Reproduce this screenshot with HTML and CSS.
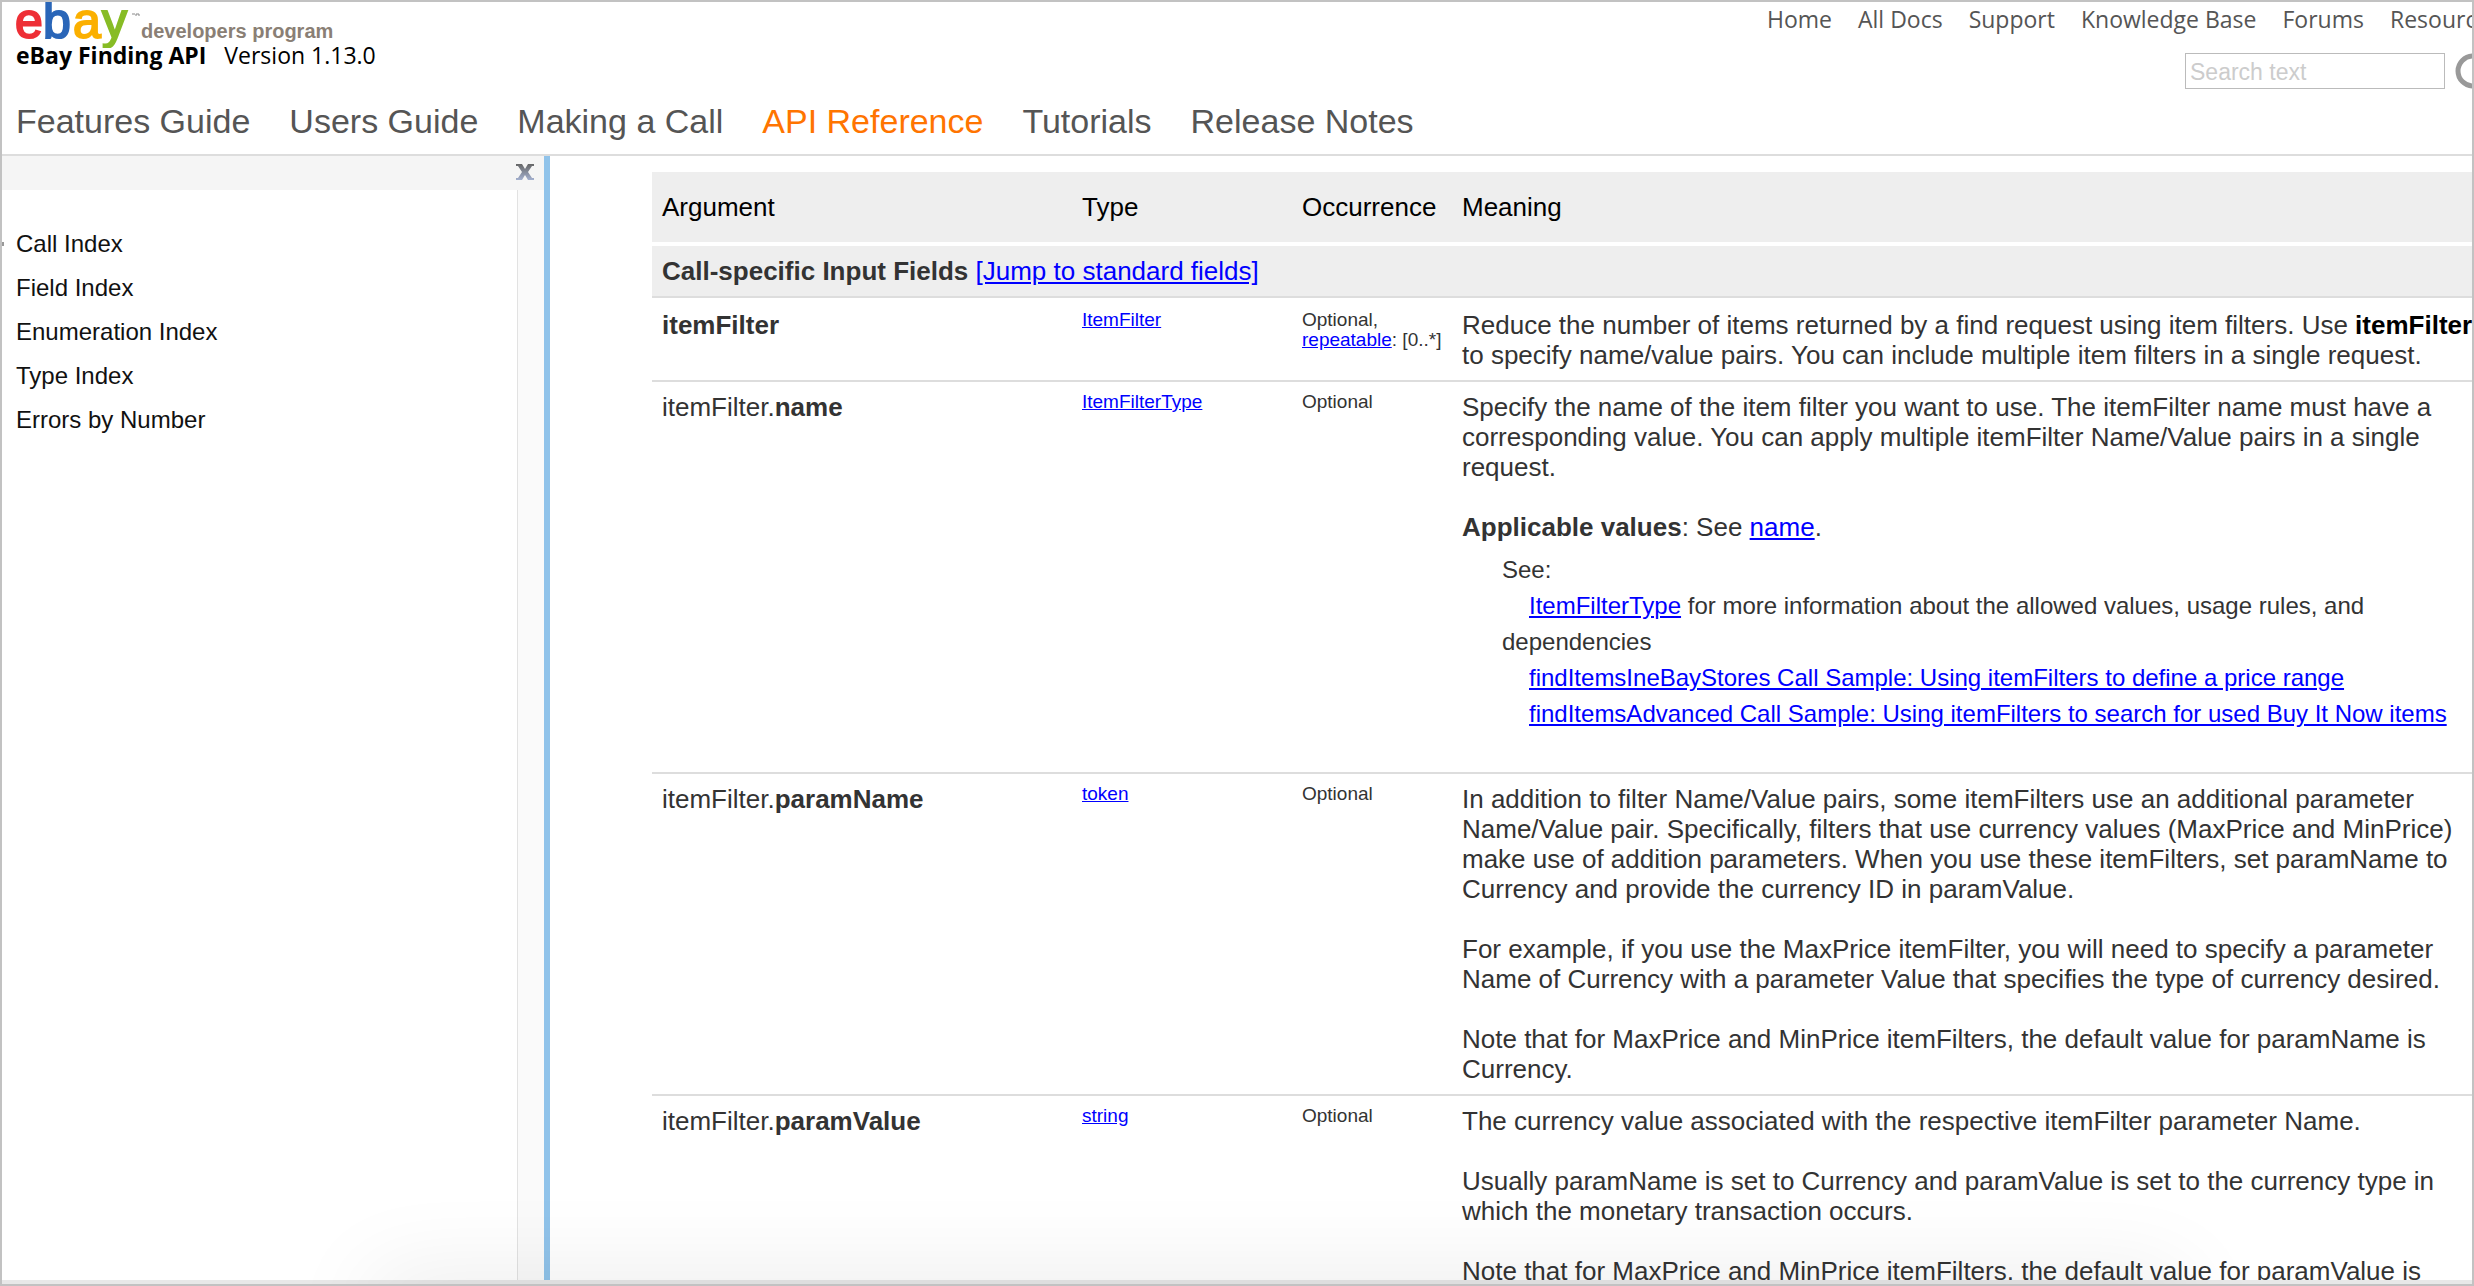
FILE: index.html
```html
<!DOCTYPE html>
<html lang="en">
<head>
  <meta charset="UTF-8">
  <meta name="viewport" content="width=device-width, initial-scale=1.0">
  <title>eBay Finding API</title>
  <link rel="stylesheet" href="styles.css">
</head>
<body>
  <div class="page">
    <header class="header">
      <div class="top">
        <div class="brand">
          <a class="logo" href="#" aria-label="eBay developers program">
            <svg width="340" height="46" viewBox="0 0 340 46">
              <g class="logoName">
                <text x="-1" y="36" fill="#ee2f36" stroke="#ee2f36">e</text>
                <text x="27" y="36" fill="#2a66b8" stroke="#2a66b8">b</text>
                <text x="57" y="36" fill="#fbb000" stroke="#fbb000">a</text>
                <text x="86" y="36" fill="#87bc25" stroke="#87bc25">y</text>
              </g>
              <path d="M116 12h3M120 14v-2h3v2" fill="none" stroke="#888" />
              <text class="logoText" x="125" y="36">developers program</text>
            </svg>
          </a>
          <p class="version"><b>eBay Finding API</b><span>Version 1.13.0</span></p>
        </div>
        <div class="tools">
          <nav class="links">
            <a href="#">Home</a>
            <a href="#">All Docs</a>
            <a href="#">Support</a>
            <a href="#">Knowledge Base</a>
            <a href="#">Forums</a>
            <a href="#">Resources</a>
          </nav>
          <form class="search">
            <input class="searchText" type="text" placeholder="Search text" aria-label="Search text">
            <button class="searchButton" type="button" aria-label="Search">
              <svg width="46" height="46" viewBox="0 0 46 46">
                <circle cx="18" cy="18" r="15" fill="none" stroke="#999" stroke-width="5" />
                <path d="M29 29l13 13" stroke="#999" stroke-width="6" />
              </svg>
            </button>
          </form>
        </div>
      </div>
      <nav class="menu">
        <a href="#">Features Guide</a>
        <a href="#">Users Guide</a>
        <a href="#">Making a Call</a>
        <a class="active" href="#">API Reference</a>
        <a href="#">Tutorials</a>
        <a href="#">Release Notes</a>
      </nav>
    </header>

    <div class="content">
      <aside class="sidebar">
        <div class="sidebarTop">
          <button class="close" type="button" aria-label="Close">
            <svg width="18" height="16" viewBox="0 0 18 16">
              <defs>
                <linearGradient id="closeFill" x1="0" y1="0" x2="0" y2="1">
                  <stop offset="0" stop-color="#666" />
                  <stop offset="1" stop-color="#a3b0cf" />
                </linearGradient>
              </defs>
              <path d="M0 0h6l3 5 3-5h6v2h-2l-4 6 4 6h2v2h-6l-3-5-3 5H0v-2h2l4-6-4-6H0z" fill="url(#closeFill)" />
            </svg>
          </button>
        </div>
        <div class="sidebarBody">
          <ul class="index">
            <li class="current"><a href="#">Call Index</a></li>
            <li><a href="#">Field Index</a></li>
            <li><a href="#">Enumeration Index</a></li>
            <li><a href="#">Type Index</a></li>
            <li><a href="#">Errors by Number</a></li>
          </ul>
          <div class="track"></div>
        </div>
      </aside>

      <main class="main">
        <table class="fields">
          <colgroup>
            <col class="colArgument">
            <col class="colType">
            <col class="colOccurrence">
            <col>
          </colgroup>
          <thead>
            <tr>
              <th>Argument</th>
              <th>Type</th>
              <th>Occurrence</th>
              <th>Meaning</th>
            </tr>
          </thead>
          <tbody>
            <tr class="section">
              <td colspan="4"><b>Call-specific Input Fields</b> <a href="#">[Jump to standard fields]</a></td>
            </tr>
            <tr>
              <td><b>itemFilter</b></td>
              <td class="small"><a href="#">ItemFilter</a></td>
              <td class="small">Optional,<br><a href="#">repeatable</a>:&nbsp;[0..*]</td>
              <td>Reduce the number of items returned by a find request using item filters. Use <b class="dark">itemFilter</b> to specify name/value pairs. You can include multiple item filters in a single request.</td>
            </tr>
            <tr>
              <td>itemFilter.<b>name</b></td>
              <td class="small"><a href="#">ItemFilterType</a></td>
              <td class="small">Optional</td>
              <td>
                <p>Specify the name of the item filter you want to use. The itemFilter name must have a corresponding value. You can apply multiple itemFilter Name/Value pairs in a single request.</p>
                <p><b>Applicable values</b>: See <a href="#">name</a>.</p>
                <div class="see">
                  See:
                  <div class="seeItem"><a href="#">ItemFilterType</a> for more information about the allowed values, usage rules, and dependencies</div>
                  <div class="seeItem"><a href="#">findItemsIneBayStores Call Sample: Using itemFilters to define a price range</a></div>
                  <div class="seeItem"><a href="#">findItemsAdvanced Call Sample: Using itemFilters to search for used Buy It Now items</a></div>
                </div>
              </td>
            </tr>
            <tr>
              <td>itemFilter.<b>paramName</b></td>
              <td class="small"><a href="#">token</a></td>
              <td class="small">Optional</td>
              <td>
                <p>In addition to filter Name/Value pairs, some itemFilters use an additional parameter Name/Value pair. Specifically, filters that use currency values (MaxPrice and MinPrice) make use of addition parameters. When you use these itemFilters, set paramName to Currency and provide the currency ID in paramValue.</p>
                <p>For example, if you use the MaxPrice itemFilter, you will need to specify a parameter Name of Currency with a parameter Value that specifies the type of currency desired.</p>
                <p>Note that for MaxPrice and MinPrice itemFilters, the default value for paramName is Currency.</p>
              </td>
            </tr>
            <tr>
              <td>itemFilter.<b>paramValue</b></td>
              <td class="small"><a href="#">string</a></td>
              <td class="small">Optional</td>
              <td>
                <p>The currency value associated with the respective itemFilter parameter Name.</p>
                <p>Usually paramName is set to Currency and paramValue is set to the currency type in which the monetary transaction occurs.</p>
                <p>Note that for MaxPrice and MinPrice itemFilters, the default value for paramValue is</p>
              </td>
            </tr>
          </tbody>
        </table>
      </main>
    </div>
    <div class="shade"></div>
  </div>
</body>
</html>
```

FILE: styles.css
```css
* {
  box-sizing: border-box;
}
body {
  margin: 0;
  font-family: "Liberation Sans", Arial, sans-serif;
  font-size: 26px;
  line-height: 30px;
  color: #333;
}
a {
  color: #0000ff;
}
p {
  margin: 0;
}
button {
  padding: 0;
  border: none;
  background: none;
  cursor: pointer;
}
svg {
  display: block;
}
.page {
  position: relative;
  display: flex;
  flex-direction: column;
  height: 100vh;
  border: 2px solid #c2c2c2;
  overflow: hidden;
}

/* header */
.header {
  flex: none;
  border-bottom: 2px solid #ddd;
}
.top {
  display: flex;
  justify-content: space-between;
  height: 90px;
  padding-left: 14px;
}
.logo {
  display: block;
  height: 38px;
}
.logoName {
  font-size: 50px;
  stroke-width: 2px;
}
.logoText {
  font-size: 20px;
  font-weight: bold;
  fill: #8a7f75;
}
.version {
  display: flex;
  gap: 18px;
  font-family: "Trebuchet MS", "Open Sans", sans-serif;
  font-size: 23px;
  color: #000;
}
.tools {
  flex: 0 0 705px;
  overflow: hidden;
}
.links {
  display: flex;
  gap: 26px;
  height: 51px;
  padding-top: 2px;
}
.links a {
  font-family: "Trebuchet MS", "Open Sans", sans-serif;
  font-size: 23px;
  font-weight: 500;
  color: #555;
  text-decoration: none;
  white-space: nowrap;
}
.search {
  display: flex;
  justify-content: flex-end;
  gap: 10px;
  margin-right: -29px;
}
.searchText {
  width: 260px;
  height: 36px;
  padding: 3px 4px 1px;
  border: 1px solid #bbb;
  font-family: inherit;
  font-size: 23px;
}
.searchText::placeholder {
  color: #ccc;
}
.menu {
  display: flex;
  gap: 39px;
  height: 62px;
  padding: 10px 14px;
}
.menu a {
  font-size: 34px;
  line-height: 38px;
  color: #555;
  text-decoration: none;
}
.menu .active {
  color: #ff7400;
}

/* columns */
.content {
  display: flex;
  flex: 1;
  min-height: 0;
  border-bottom: 4px solid #e8e8e8;
}
.sidebar {
  display: flex;
  flex-direction: column;
  flex: 0 0 548px;
  border-right: 6px solid #90c3ea;
}
.sidebarTop {
  display: flex;
  justify-content: flex-end;
  align-items: flex-start;
  height: 34px;
  padding: 8px 10px;
  background-color: #f5f5f5;
}
.sidebarBody {
  display: flex;
  flex: 1;
}
.index {
  flex: 1;
  margin: 0;
  padding: 32px 0 0;
  list-style: none;
}
.index li {
  padding-left: 14px;
  font-size: 24px;
  line-height: 44px;
}
.index .current {
  background: linear-gradient(#999, #999) left center / 2px 4px no-repeat;
}
.index a {
  color: #111;
  text-decoration: none;
}
.track {
  width: 27px;
  border-left: 1px solid #e2e2e2;
  background-color: #fafafa;
}
.main {
  flex: 1;
  min-width: 0;
  padding: 16px 0 0 102px;
  overflow: hidden;
}

/* the table runs past the right edge of its frame */
.fields {
  width: calc(100% + 28px);
  table-layout: fixed;
  border-collapse: separate;
  border-spacing: 0;
}
.colArgument {
  width: 420px;
}
.colType {
  width: 220px;
}
.colOccurrence {
  width: 160px;
}
.fields th {
  height: 74px;
  padding: 0 10px;
  border-bottom: 4px solid #fff;
  background-color: #eee;
  color: #000;
  font-weight: normal;
  text-align: left;
}
.fields td {
  padding: 10px;
  border-bottom: 2px solid #ddd;
  vertical-align: top;
}
.fields .section td {
  background-color: #eee;
}
.fields .section + tr td {
  padding-top: 12px;
}
.fields .small {
  padding-right: 0;
  font-size: 19px;
  line-height: 20px;
}
.fields p + p {
  margin-top: 30px;
}
.dark {
  color: #000;
}
.see {
  margin: 10px 0 30px 40px;
  font-size: 24px;
  line-height: 36px;
}
.seeItem {
  text-indent: 27px;
}

/* soft shadow rising from the bottom edge */
.shade {
  position: absolute;
  right: 320px;
  bottom: -40px;
  left: 400px;
  height: 20px;
  box-shadow: 0 0 90px 30px rgba(0, 0, 0, 0.08);
  pointer-events: none;
}
```
